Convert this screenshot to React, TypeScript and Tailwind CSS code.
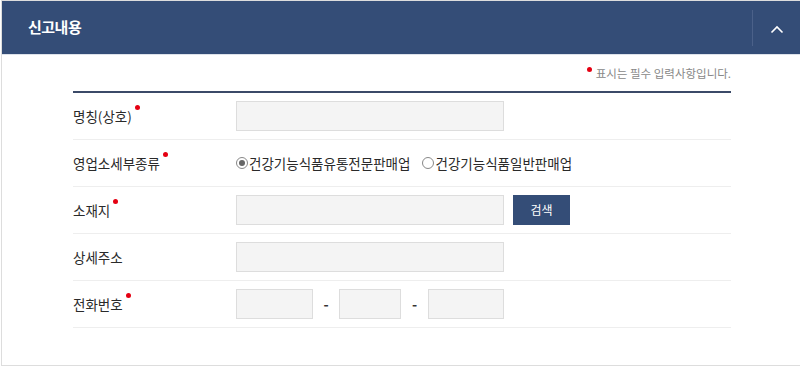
import React from "react";

const font = { fontFamily: '"Noto Sans CJK KR", "Noto Sans", sans-serif' };

function Req() {
  return <span className="relative -top-[9px] ml-[3px] inline-block h-[5px] w-[5px] rounded-full bg-[#e50012]" />;
}

function Field({ w = "w-[268px]" }: { w?: string }) {
  return <div className={`${w} h-[30px] border border-[#dddddd] bg-[#f4f4f4]`} />;
}

function Row({ label, req, children }: { label: string; req?: boolean; children: React.ReactNode }) {
  return (
    <div className="flex h-[47px] items-center border-b border-[#eeeeee]">
      <div className="flex w-[163px] items-center text-[13.5px] text-[#2a2a2a]">
        {label}
        {req && <Req />}
      </div>
      <div className="flex items-center">{children}</div>
    </div>
  );
}

function Radio({ checked, label }: { checked?: boolean; label: string }) {
  return (
    <label className="flex items-center text-[13.5px] text-[#2a2a2a]">
      <span className="mr-px flex h-[12px] w-[12px] items-center justify-center rounded-full border border-[#888888] bg-white">
        {checked && <span className="h-[6px] w-[6px] rounded-full bg-[#666666]" />}
      </span>
      {label}
    </label>
  );
}

export default function App() {
  return (
    <div className="ml-px h-[366px] w-[799px] border-b border-l border-t border-[#dddddd] bg-white" style={font}>
      {/* header */}
      <div className="flex h-[54px] items-center border-b border-[#dde2ea] bg-[#344d77]">
        <span className="flex-1 pl-[26px] text-[15px] font-bold tracking-[-0.5px] text-white">신고내용</span>
        <div className="h-[36px] w-px bg-[#4b6189]" />
        <button className="flex h-full w-[47px] items-center justify-center pt-[3px]">
          <svg width="14" height="9" viewBox="0 0 14 9" fill="none">
            <path d="M1.5 7.5 L7 2 L12.5 7.5" stroke="white" strokeWidth="1.6" />
          </svg>
        </button>
      </div>

      <div className="pl-[71px] pr-[69px]">
        <div className="flex h-[36px] items-center justify-end pt-[2px] text-[11.5px] text-[#888888]">
          <span className="relative -top-[5px] mr-[4px] inline-block h-[5px] w-[5px] rounded-full bg-[#e50012]" />
          표시는 필수 입력사항입니다.
        </div>
        <div className="border-t-2 border-[#3b4a68]">
          <Row label="명칭(상호)" req>
            <Field />
          </Row>
          <Row label="영업소세부종류" req>
            <div className="flex items-center gap-[12px]">
              <Radio checked label="건강기능식품유통전문판매업" />
              <Radio label="건강기능식품일반판매업" />
            </div>
          </Row>
          <Row label="소재지" req>
            <Field />
            <button className="ml-[9px] h-[30px] w-[57px] bg-[#344d77] text-[12px] text-white">검색</button>
          </Row>
          <Row label="상세주소">
            <Field />
          </Row>
          <Row label="전화번호" req>
            <Field w="w-[77px]" />
            <span className="w-[26px] text-center text-[14px] font-bold text-[#333333]">-</span>
            <Field w="w-[62px]" />
            <span className="w-[27px] text-center text-[14px] font-bold text-[#333333]">-</span>
            <Field w="w-[76px]" />
          </Row>
        </div>
      </div>
    </div>
  );
}
